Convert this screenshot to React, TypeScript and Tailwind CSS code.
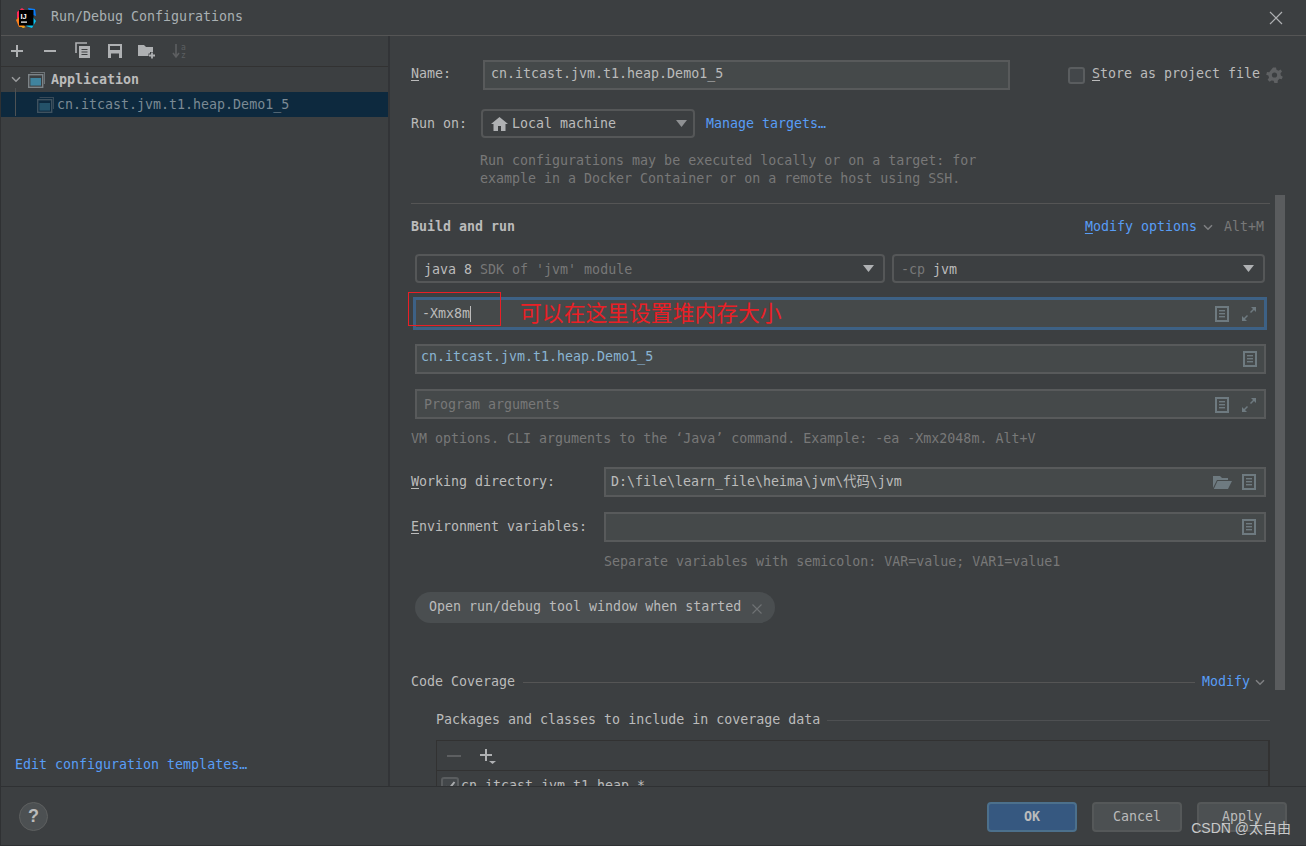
import React from "react";

const Doc = () => (
  <svg width="14" height="16" viewBox="0 0 14 16" className="shrink-0">
    <rect x="0" y="0" width="14" height="16" fill="#6e7a80" />
    <rect x="2" y="2" width="10" height="12" fill="#45494a" />
    <rect x="4" y="4" width="6" height="1.4" fill="#6e7a80" />
    <rect x="4" y="7" width="6" height="1.4" fill="#6e7a80" />
    <rect x="4" y="10" width="6" height="1.4" fill="#6e7a80" />
  </svg>
);

const Expand = () => (
  <svg width="16" height="16" viewBox="0 0 16 16" className="shrink-0" fill="none">
    <path d="M2.5 13.5L6.5 9.5M9.5 6.5L13.5 2.5" stroke="#6e7a80" strokeWidth="1.5" />
    <path d="M10 1H15V6Z" fill="#6e7a80" />
    <path d="M1 10V15H6Z" fill="#6e7a80" />
  </svg>
);

const Arrow = ({ color = "#afb1b3" }: { color?: string }) => (
  <svg width="11" height="7" viewBox="0 0 11 7" className="shrink-0">
    <path d="M0 0H11L5.5 7Z" fill={color} />
  </svg>
);

const Chevron = ({ color = "#7f8183", size = 10 }: { color?: string; size?: number }) => (
  <svg width={size} height="7" viewBox="0 0 10 7" className="shrink-0" fill="none">
    <path d="M1 1.2L5 5.2L9 1.2" stroke={color} strokeWidth="1.5" />
  </svg>
);

const AppIcon = ({ dim = false }: { dim?: boolean }) => (
  <svg width="17" height="16" viewBox="0 0 17 16" className="shrink-0" style={{ opacity: dim ? 0.45 : 1 }}>
    <path d="M2.5 0.5H16.5V12" fill="none" stroke="#6e7478" strokeWidth="1.2" />
    <rect x="0.7" y="2.7" width="14" height="12.6" fill="none" stroke="#7d8488" strokeWidth="1.4" />
    <rect x="2.4" y="6" width="10.6" height="7.6" fill="#40849f" />
  </svg>
);

const Logo = () => (
  <svg width="20" height="20" viewBox="0 0 20 20" className="shrink-0">
    <path d="M1 4L6 0L10 3L4 13L1 10Z" fill="#fe2857" />
    <path d="M0 12L4 8L9 19L3 19Z" fill="#fc801d" />
    <path d="M12 0L19 1L20 8L14 6Z" fill="#087cfa" />
    <path d="M16 8L20 13L16 20L10 18Z" fill="#07c3f2" />
    <path d="M4 18L10 19L7 20Z" fill="#fdb60d" />
    <rect x="3" y="2" width="14.5" height="15.5" fill="#000" />
    <rect x="5" y="13.5" width="6" height="1.2" fill="#fff" />
    <text x="4.4" y="10.5" fill="#fff" fontSize="7.5" fontWeight="700" fontFamily="Liberation Sans">IJ</text>
  </svg>
);

const Field = ({ className = "", children }: { className?: string; children?: React.ReactNode }) => (
  <div className={`h-[30px] bg-[#45494a] border-2 border-[#585a5b] flex items-center ${className}`}>{children}</div>
);

const Select = ({ className = "", children }: { className?: string; children?: React.ReactNode }) => (
  <div className={`h-[29px] border-2 border-[#555758] rounded-[4px] flex items-center ${className}`}>{children}</div>
);

const Btn = ({ children, primary = false }: { children: React.ReactNode; primary?: boolean }) => (
  <div
    className={`w-[90px] h-[30px] rounded-[4px] border-2 flex items-center justify-center ${
      primary ? "bg-[#365880] border-[#4c708c] font-bold text-[#bbbbbb]" : "bg-[#4c5052] border-[#555859] text-[#bbbbbb]"
    }`}
  >
    {children}
  </div>
);

export default function App() {
  return (
    <div className="w-[1306px] h-[846px] overflow-hidden bg-[#3c3f41] text-[#bbbbbb] flex flex-col relative border-l border-b border-[#2f3133] font-['DejaVu_Sans_Mono',monospace] text-[13.3px] leading-[18px]">
      {/* Title bar */}
      <div className="h-[36px] shrink-0 flex items-center border-b border-[#555555] pl-[15px] pr-[23px]">
        <Logo />
        <span className="ml-[15px] mb-[2px] text-[#a9b0b3]">Run/Debug Configurations</span>
        <svg width="14" height="14" viewBox="0 0 14 14" className="ml-auto" fill="none">
          <path d="M1 1L13 13M13 1L1 13" stroke="#afb1b3" strokeWidth="1.2" />
        </svg>
      </div>

      <div className="h-[750px] shrink-0 flex">
        {/* Left panel */}
        <div className="w-[389px] shrink-0 border-r-2 border-[#323437] flex flex-col">
          <div className="h-[31px] shrink-0 border-b border-[#323232] flex items-center pl-[8px] pb-[1px]">
            <svg width="16" height="16" viewBox="0 0 16 16"><path d="M8 2V14M2 8H14" stroke="#afb1b3" strokeWidth="2" /></svg>
            <svg width="16" height="16" viewBox="0 0 16 16" className="ml-[17px]"><path d="M2 8H14" stroke="#afb1b3" strokeWidth="2" /></svg>
            <svg width="16" height="17" viewBox="0 0 16 17" className="ml-[17px]" fill="none">
              <path d="M1 11V1H12" stroke="#afb1b3" strokeWidth="1.6" />
              <rect x="4" y="4" width="11" height="12" fill="#afb1b3" />
              <path d="M6.5 7.5H12.5M6.5 10H12.5M6.5 12.5H12.5" stroke="#3c3f41" strokeWidth="1.2" />
            </svg>
            <svg width="16" height="16" viewBox="0 0 16 16" className="ml-[16px]">
              <path d="M1 1H15V15H1Z" fill="#afb1b3" />
              <rect x="3" y="3" width="10" height="4" fill="#3c3f41" />
              <rect x="4" y="10.5" width="8" height="4.5" fill="#3c3f41" />
            </svg>
            <svg width="19" height="16" viewBox="0 0 19 16" className="ml-[15px]">
              <path d="M0 2H6L8 4H15V13H0Z" fill="#afb1b3" />
              <path d="M14 9V16M10.5 12.5H17.5" stroke="#3c3f41" strokeWidth="4" />
              <path d="M14 9.5V15.5M11 12.5H17" stroke="#afb1b3" strokeWidth="1.8" />
            </svg>
            <svg width="17" height="16" viewBox="0 0 17 16" className="ml-[15px]" fill="none">
              <path d="M4 1V13M1 10L4 14L7 10" stroke="#5d5f61" strokeWidth="1.6" />
              <text x="9" y="7" fontSize="8" fill="#5d5f61" fontFamily="DejaVu Sans Mono">a</text>
              <text x="9" y="15" fontSize="8" fill="#5d5f61" fontFamily="DejaVu Sans Mono">z</text>
            </svg>
          </div>
          <div className="h-[25px] shrink-0 flex items-center pl-[10px] relative">
            <Chevron color="#9a9c9e" />
            <span className="ml-[7px]"><AppIcon /></span>
            <span className="ml-[6px] font-bold text-[#bbbbbb]">Application</span>
          </div>
          <div className="h-[25px] shrink-0 bg-[#0d293e] flex items-center pl-[36px] text-[#7b8a94] relative">
            <AppIcon dim />
            <span className="ml-[3px]">cn.itcast.jvm.t1.heap.Demo1_5</span>
            <div className="absolute left-[14px] top-[-4px] bottom-[1px] w-px bg-[#4e5254]" />
          </div>
          <div className="mt-auto mb-[12px] pl-[14px] text-[#589df6]">Edit configuration templates…</div>
        </div>

        {/* Right panel */}
        <div className="flex-1 min-w-0 relative overflow-hidden pl-[21px]">
          <div className="absolute left-[885px] top-[159px] w-[10px] h-[495px] bg-[#5a5c5e]" />

          <div className="mt-[24px] h-[30px] flex items-center">
            <span className="w-[72px] mb-[2px]"><u className="underline-offset-2">N</u>ame:</span>
            <Field className="w-[527px] pl-[6px] pb-[2px]">cn.itcast.jvm.t1.heap.Demo1_5</Field>
            <div className="ml-[58px] w-[17px] h-[17px] rounded-[3px] border-2 border-[#5a5d5f] bg-[#43474a] shrink-0" />
            <span className="ml-[7px] mb-[2px]"><u className="underline-offset-2">S</u>tore as project file</span>
            <svg width="17" height="17" viewBox="0 0 17 17" className="ml-[6px] shrink-0">
              <path d="M7 0.5H10L10.5 2.8L12.5 3.7L14.6 2.5L16 4.5L14.5 6.3L14.8 8.5L16.8 9.8L15.7 12.3L13.4 11.8L11.8 13.5L11.6 16H8.4L7.6 13.8L5.5 13.4L3.6 14.8L1.6 12.7L3 10.8L2.4 8.5L0.2 7.8L1 4.9L3.2 5.2L4.8 3.3Z" fill="#5f6163" />
              <circle cx="8.5" cy="8" r="2.6" fill="#3c3f41" />
            </svg>
          </div>

          <div className="mt-[19px] h-[29px] flex items-center">
            <span className="w-[70px]">Run on:</span>
            <Select className="w-[214px] pl-[8px] pr-[6px]">
              <svg width="17" height="14" viewBox="0 0 17 14" className="shrink-0">
                <path d="M8.5 0L17 7H14.5V14H10V9H7V14H2.5V7H0Z" fill="#afb1b3" />
              </svg>
              <span className="ml-[4px]">Local machine</span>
              <span className="ml-auto"><Arrow color="#8f9193" /></span>
            </Select>
            <span className="ml-[11px] text-[#589df6]">Manage targets…</span>
          </div>

          <div className="mt-[14px] pl-[69px] text-[#787878]">
            <div>Run configurations may be executed locally or on a target: for</div>
            <div>example in a Docker Container or on a remote host using SSH.</div>
          </div>

          <div className="mt-[15px] h-px w-[859px] bg-[#555555]" />

          <div className="mt-[13px] h-[20px] flex items-center w-[853px]">
            <span className="font-bold">Build and run</span>
            <span className="ml-auto text-[#589df6]"><u className="underline-offset-2">M</u>odify options</span>
            <span className="ml-[6px]"><Chevron /></span>
            <span className="ml-[11px] text-[#787878]">Alt+M</span>
          </div>

          <div className="mt-[17px] flex ml-[4px] gap-[7px]">
            <Select className="w-[470px] pl-[7px] pr-[9px] pt-[2px]">
              <span>java 8</span>
              <span className="ml-[8px] text-[#787878]">SDK of 'jvm' module</span>
              <span className="ml-auto mb-[2px]"><Arrow /></span>
            </Select>
            <Select className="w-[373px] pl-[7px] pr-[9px] pt-[2px]">
              <span className="text-[#787878]">-cp</span>
              <span className="ml-[8px]">jvm</span>
              <span className="ml-auto mb-[2px]"><Arrow /></span>
            </Select>
          </div>

          <div className="mt-[14px] ml-[2px] w-[854px] h-[33px] bg-[#45494a] border-[3px] border-[#3d6185] flex items-center pl-[6px] pr-[7px] relative">
            <span>-Xmx8m</span>
            <span className="w-px h-[16px] bg-[#bbbbbb]" />
            <span className="ml-[49px] mb-[3px] text-[21.8px] leading-[30px] text-[#ea1f26] font-['Noto_Sans_CJK_SC',sans-serif]">可以在这里设置堆内存大小</span>
            <span className="ml-auto"><Doc /></span>
            <span className="ml-[12px]"><Expand /></span>
            <div className="absolute left-[-8px] top-[-8px] w-[93px] h-[34px] border border-[#ea1f26]" />
          </div>

          <Field className="mt-[14px] ml-[4px] w-[851px] pl-[4px] pr-[7px] pb-[4px]">
            <span className="text-[#8ab4d2]">cn.itcast.jvm.t1.heap.Demo1_5</span>
            <span className="ml-auto mt-[4px]"><Doc /></span>
          </Field>

          <Field className="mt-[15px] ml-[4px] w-[851px] pl-[7px] pr-[7px] pt-[1px]">
            <span className="text-[#787878]">Program arguments</span>
            <span className="ml-auto"><Doc /></span>
            <span className="ml-[12px]"><Expand /></span>
          </Field>

          <div className="mt-[11px] text-[#787878]">VM options. CLI arguments to the ‘Java’ command. Example: -ea -Xmx2048m. Alt+V</div>

          <div className="mt-[19px] flex items-center">
            <span className="w-[193px]"><u className="underline-offset-2">W</u>orking directory:</span>
            <Field className="w-[662px] pl-[5px] pr-[8px]">
              <span className="font-['DejaVu_Sans_Mono','Noto_Sans_CJK_SC',monospace]">D:\file\learn_file\heima\jvm\代码\jvm</span>
              <svg width="19" height="15" viewBox="0 0 19 15" className="ml-auto shrink-0">
                <path d="M0 1H7L9 3H15V5H4L0 13Z" fill="#6e7a80" />
                <path d="M4.5 6H19L15 14H0.8Z" fill="#6e7a80" />
              </svg>
              <span className="ml-[10px]"><Doc /></span>
            </Field>
          </div>

          <div className="mt-[15px] flex items-center">
            <span className="w-[193px]"><u className="underline-offset-2">E</u>nvironment variables:</span>
            <Field className="w-[662px] pr-[8px]">
              <span className="ml-auto"><Doc /></span>
            </Field>
          </div>

          <div className="mt-[11px] pl-[193px] text-[#787878]">Separate variables with semicolon: VAR=value; VAR1=value1</div>

          <div className="mt-[21px] ml-[4px] w-[360px] h-[31px] rounded-full bg-[#4a4e50] flex items-center pl-[14px]">
            <span className="mb-[2px]">Open run/debug tool window when started</span>
            <svg width="10" height="10" viewBox="0 0 10 10" className="ml-[11px] mt-[2px]" fill="none">
              <path d="M0.5 0.5L9.5 9.5M9.5 0.5L0.5 9.5" stroke="#6f7274" strokeWidth="1.1" />
            </svg>
          </div>

          <div className="mt-[49px] h-[20px] flex items-center w-[854px]">
            <span>Code Coverage</span>
            <div className="flex-1 h-px bg-[#555555] ml-[8px] mr-[7px]" />
            <span className="text-[#589df6]">Modify</span>
            <span className="ml-[5px]"><Chevron /></span>
          </div>

          <div className="mt-[18px] h-[20px] flex items-center ml-[25px] w-[834px]">
            <span>Packages and classes to include in coverage data</span>
            <div className="flex-1 h-px bg-[#4e5052] ml-[7px]" />
          </div>

          <div className="mt-[10px] ml-[25px] w-[834px] h-[60px] border-l border-t border-r-2 border-[#323232]">
            <div className="h-[30px] border-b border-[#323232] flex items-center pl-[10px]">
              <svg width="14" height="4" viewBox="0 0 14 4"><path d="M0 2H14" stroke="#5d5f61" strokeWidth="2" /></svg>
              <svg width="18" height="18" viewBox="0 0 18 18" className="ml-[18px]">
                <path d="M7 2V14M1 8H13" stroke="#afb1b3" strokeWidth="2" />
                <path d="M10 14H17L13.5 17Z" fill="#afb1b3" />
              </svg>
            </div>
            <div className="flex items-start pt-[6px] pl-[4px]">
              <div className="w-[18px] h-[18px] rounded-[3px] bg-[#43474a] border-2 border-[#5a5d5f] flex items-center justify-center shrink-0">
                <svg width="12" height="12" viewBox="0 0 12 12" fill="none"><path d="M1.5 6.5L4.5 9.5L10.5 2" stroke="#a9abad" strokeWidth="2" /></svg>
              </div>
              <span className="ml-[2px]">cn.itcast.jvm.t1.heap.*</span>
            </div>
          </div>
        </div>
      </div>

      {/* Footer */}
      <div className="h-[59px] shrink-0 border-t border-[#2f3133] flex items-center pl-[18px] pr-[19px] relative">
        <div className="w-[29px] h-[29px] rounded-full bg-[#4c5052] border border-[#5e6060] flex items-center justify-center font-bold text-[18px] text-[#bbbbbb] font-['Liberation_Sans',sans-serif]">?</div>
        <div className="ml-auto flex gap-[15px] mt-[1px]">
          <Btn primary>OK</Btn>
          <Btn>Cancel</Btn>
          <Btn><span><u className="underline-offset-2">A</u>pply</span></Btn>
        </div>
        <div className="absolute right-[15px] bottom-[8px] text-[14px] leading-[18px] text-[#c8c9ca] font-['Liberation_Sans','Noto_Sans_CJK_SC',sans-serif]">CSDN @太自由</div>
      </div>
    </div>
  );
}
